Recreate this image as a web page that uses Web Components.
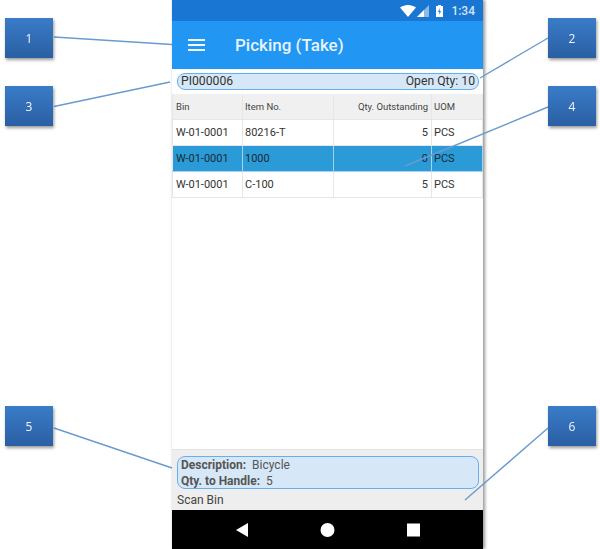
<!DOCTYPE html>
<html>
<head>
<meta charset="utf-8">
<title>Picking (Take)</title>
<style>
    html, body { margin: 0; padding: 0; background: white; }
    body { font-family: Roboto, "Liberation Sans", sans-serif; overflow: hidden; }
</style>
</head>
<body>
<pick-stage>
    <phone-frame>
        <status-bar slot="top"></status-bar>
        <app-bar slot="top">Picking (Take)</app-bar>
        <info-pill slot="top" compact>
            <span>PI000006</span>
            <span slot="end">Open Qty: 10</span>
        </info-pill>
        <pick-table>
            <pick-row header><span>Bin</span><span>Item No.</span><span class="num">Qty. Outstanding</span><span>UOM</span></pick-row>
            <pick-row><span>W-01-0001</span><span>80216-T</span><span class="num">5</span><span>PCS</span></pick-row>
            <pick-row selected><span>W-01-0001</span><span>1000</span><span class="num">0</span><span>PCS</span></pick-row>
            <pick-row><span>W-01-0001</span><span>C-100</span><span class="num">5</span><span>PCS</span></pick-row>
        </pick-table>
        <info-pill slot="bottom">
            <div><b>Description:</b>&nbsp; Bicycle</div>
            <div><b>Qty. to Handle:</b>&nbsp; 5</div>
        </info-pill>
        <scan-bar slot="bottom">Scan Bin</scan-bar>
        <nav-bar slot="bottom"></nav-bar>
    </phone-frame>
    <call-out slot="notes" style="left:5px;top:18px">1</call-out>
    <call-out slot="notes" style="left:548px;top:18px">2</call-out>
    <call-out slot="notes" style="left:5px;top:86px">3</call-out>
    <call-out slot="notes" style="left:548px;top:86px">4</call-out>
    <call-out slot="notes" style="left:5px;top:406px">5</call-out>
    <call-out slot="notes" style="left:548px;top:406px">6</call-out>
</pick-stage>

<script>
const pickStageTemplate = document.createElement('template');
pickStageTemplate.innerHTML = `
    <style>
        :host {
            display: block;
            position: relative;
            width: 600px;
            height: 549px;
            padding-left: 172px;
            box-sizing: border-box;
            filter: blur(0.6px);
        }
        svg {
            position: absolute;
            left: 0;
            top: 0;
        }
        line {
            stroke: #6a9ad0;
            stroke-width: 1.4;
        }
    </style>
    <slot></slot>
    <svg width="600" height="549" viewBox="0 0 600 549">
        <line x1="54" y1="37" x2="172" y2="44.5"/>
        <line x1="54" y1="106.5" x2="170" y2="82"/>
        <line x1="548" y1="38" x2="480" y2="78"/>
        <line x1="548" y1="107" x2="405" y2="166"/>
        <line x1="54" y1="428" x2="172" y2="468"/>
        <line x1="548" y1="428" x2="465" y2="500"/>
    </svg>
    <slot name="notes"></slot>
`;

class PickStage extends HTMLElement {
    constructor() {
        super();
        this.attachShadow({ mode: 'open' });
        this.shadowRoot.appendChild(pickStageTemplate.content.cloneNode(true));
    }
}

const callOutTemplate = document.createElement('template');
callOutTemplate.innerHTML = `
    <style>
        :host {
            position: absolute;
            display: flex;
            align-items: center;
            justify-content: center;
            width: 48px;
            height: 40px;
            background: linear-gradient(#3a7cc8, #2a5fa3);
            box-shadow: 1px 2px 3px rgba(0, 0, 0, 0.4);
            color: #f2f6fb;
            font-family: "Open Sans", sans-serif;
            font-size: 12px;
        }
    </style>
    <slot></slot>
`;

class CallOut extends HTMLElement {
    constructor() {
        super();
        this.attachShadow({ mode: 'open' });
        this.shadowRoot.appendChild(callOutTemplate.content.cloneNode(true));
    }
}

const phoneFrameTemplate = document.createElement('template');
phoneFrameTemplate.innerHTML = `
    <style>
        :host {
            display: flex;
            flex-direction: column;
            width: 311px;
            height: 549px;
            background: #eeeeee;
            box-shadow: 2px 0 3px rgba(0, 0, 0, 0.4), -1px 0 2px rgba(0, 0, 0, 0.06);
        }
        .middle {
            flex: 1;
            display: flex;
            min-height: 0;
        }
    </style>
    <slot name="top"></slot>
    <div class="middle"><slot></slot></div>
    <slot name="bottom"></slot>
`;

class PhoneFrame extends HTMLElement {
    constructor() {
        super();
        this.attachShadow({ mode: 'open' });
        this.shadowRoot.appendChild(phoneFrameTemplate.content.cloneNode(true));
    }
}

const statusBarTemplate = document.createElement('template');
statusBarTemplate.innerHTML = `
    <style>
        :host {
            display: flex;
            align-items: center;
            justify-content: flex-end;
            height: 21px;
            padding-right: 8px;
            background: #1976d2;
            color: #d5e5f7;
            font-size: 12px;
            font-weight: 500;
        }
        svg { display: block; }
        .wifi { margin-right: 1px; }
        .signal { margin-right: 7px; }
        .battery { margin-right: 8px; }
    </style>
    <svg class="wifi" width="16" height="12" viewBox="0 0 16 12">
        <path d="M0 2.6C4.4-.8 11.6-.8 16 2.6L8 12Z" fill="#fff"/>
    </svg>
    <svg class="signal" width="12" height="12" viewBox="0 0 12 12">
        <path d="M12 0V12H0Z" fill="#fff" fill-opacity="0.5"/>
        <path d="M7 5V12H0Z" fill="#fff"/>
    </svg>
    <svg class="battery" width="7" height="12" viewBox="0 0 7 12">
        <path d="M2 0H5V1H7V12H0V1H2Z" fill="#fff"/>
        <path d="M4 3 2 7H3.4L3 10 5 6H3.6Z" fill="#1976d2"/>
    </svg>
    <span>1:34</span>
`;

class StatusBar extends HTMLElement {
    constructor() {
        super();
        this.attachShadow({ mode: 'open' });
        this.shadowRoot.appendChild(statusBarTemplate.content.cloneNode(true));
    }
}

const appBarTemplate = document.createElement('template');
appBarTemplate.innerHTML = `
    <style>
        :host {
            display: flex;
            align-items: center;
            gap: 30px;
            height: 48px;
            padding-left: 16px;
            background: #2196f3;
            color: #e8f3fd;
            font-size: 17px;
            font-weight: 500;
        }
        svg { display: block; }
    </style>
    <svg width="17" height="12" viewBox="0 0 17 12">
        <path d="M0 1H17M0 6H17M0 11H17" stroke="#f2f8fe" stroke-width="1.8"/>
    </svg>
    <slot></slot>
`;

class AppBar extends HTMLElement {
    constructor() {
        super();
        this.attachShadow({ mode: 'open' });
        this.shadowRoot.appendChild(appBarTemplate.content.cloneNode(true));
    }
}

const infoPillTemplate = document.createElement('template');
infoPillTemplate.innerHTML = `
    <style>
        :host {
            display: block;
            padding: 6px 4px 1px 5px;
            background: #eeeeee;
            color: #555;
            font-size: 12px;
        }
        :host([compact]) {
            padding: 4px 4px 4px 5px;
            background: white;
            color: #333;
            font-size: 12.2px;
        }
        .pill {
            display: flex;
            justify-content: space-between;
            box-sizing: border-box;
            height: 33px;
            padding: 1px 3px;
            line-height: 15.5px;
            background: #d6e8f7;
            border: 1.5px solid #64b0ee;
            border-radius: 8px;
        }
        :host([compact]) .pill {
            height: 17px;
            padding: 0 3px;
            line-height: 14px;
        }
        ::slotted(div) { white-space: nowrap; }
    </style>
    <div class="pill">
        <div><slot></slot></div>
        <slot name="end"></slot>
    </div>
`;

class InfoPill extends HTMLElement {
    constructor() {
        super();
        this.attachShadow({ mode: 'open' });
        this.shadowRoot.appendChild(infoPillTemplate.content.cloneNode(true));
    }
}

const pickTableTemplate = document.createElement('template');
pickTableTemplate.innerHTML = `
    <style>
        :host {
            display: block;
            flex: 1;
            background: white;
            border-bottom: 1px solid #e3e3e3;
        }
    </style>
    <slot></slot>
`;

class PickTable extends HTMLElement {
    constructor() {
        super();
        this.attachShadow({ mode: 'open' });
        this.shadowRoot.appendChild(pickTableTemplate.content.cloneNode(true));
    }
}

const pickRowTemplate = document.createElement('template');
pickRowTemplate.innerHTML = `
    <style>
        :host {
            display: grid;
            grid-template-columns: 69px 91px 98px 1fr;
            height: 26px;
            box-sizing: border-box;
            padding-left: 2px;
            background: white;
            border-bottom: 1px solid #e6e6e6;
            box-shadow: inset 1px 0 0 #e6e6e6;
            color: #333;
            font-size: 11px;
        }
        :host([header]) {
            background: #f0f0f0;
            color: #444;
            font-size: 9.5px;
        }
        :host([selected]) {
            background: #2a9bd6;
            color: #1c2a33;
            border-bottom-color: #a9d3ec;
        }
        ::slotted(span) {
            display: flex;
            align-items: center;
            padding: 0 3px 0 2px;
            border-right: 1px solid #e6e6e6;
        }
        :host([selected]) ::slotted(span) {
            border-right-color: #a9d3ec;
        }
        ::slotted(.num) {
            justify-content: flex-end;
        }
    </style>
    <slot></slot>
`;

class PickRow extends HTMLElement {
    constructor() {
        super();
        this.attachShadow({ mode: 'open' });
        this.shadowRoot.appendChild(pickRowTemplate.content.cloneNode(true));
    }
}

const scanBarTemplate = document.createElement('template');
scanBarTemplate.innerHTML = `
    <style>
        :host {
            display: flex;
            align-items: center;
            height: 20px;
            padding-left: 5px;
            background: #eeeeee;
            color: #444;
            font-size: 12px;
        }
    </style>
    <slot></slot>
`;

class ScanBar extends HTMLElement {
    constructor() {
        super();
        this.attachShadow({ mode: 'open' });
        this.shadowRoot.appendChild(scanBarTemplate.content.cloneNode(true));
    }
}

const navBarTemplate = document.createElement('template');
navBarTemplate.innerHTML = `
    <style>
        :host {
            display: block;
            height: 39px;
            background: black;
        }
        svg { display: block; }
    </style>
    <svg width="311" height="39" viewBox="0 0 311 39">
        <path d="M76 13V27L64 20Z" fill="#fff"/>
        <circle cx="155.5" cy="20" r="7" fill="#fff"/>
        <rect x="235" y="13.5" width="13" height="13" fill="#fff"/>
    </svg>
`;

class NavBar extends HTMLElement {
    constructor() {
        super();
        this.attachShadow({ mode: 'open' });
        this.shadowRoot.appendChild(navBarTemplate.content.cloneNode(true));
    }
}

window.customElements.define('pick-stage', PickStage);
window.customElements.define('call-out', CallOut);
window.customElements.define('phone-frame', PhoneFrame);
window.customElements.define('status-bar', StatusBar);
window.customElements.define('app-bar', AppBar);
window.customElements.define('info-pill', InfoPill);
window.customElements.define('pick-table', PickTable);
window.customElements.define('pick-row', PickRow);
window.customElements.define('scan-bar', ScanBar);
window.customElements.define('nav-bar', NavBar);
</script>
</body>
</html>
